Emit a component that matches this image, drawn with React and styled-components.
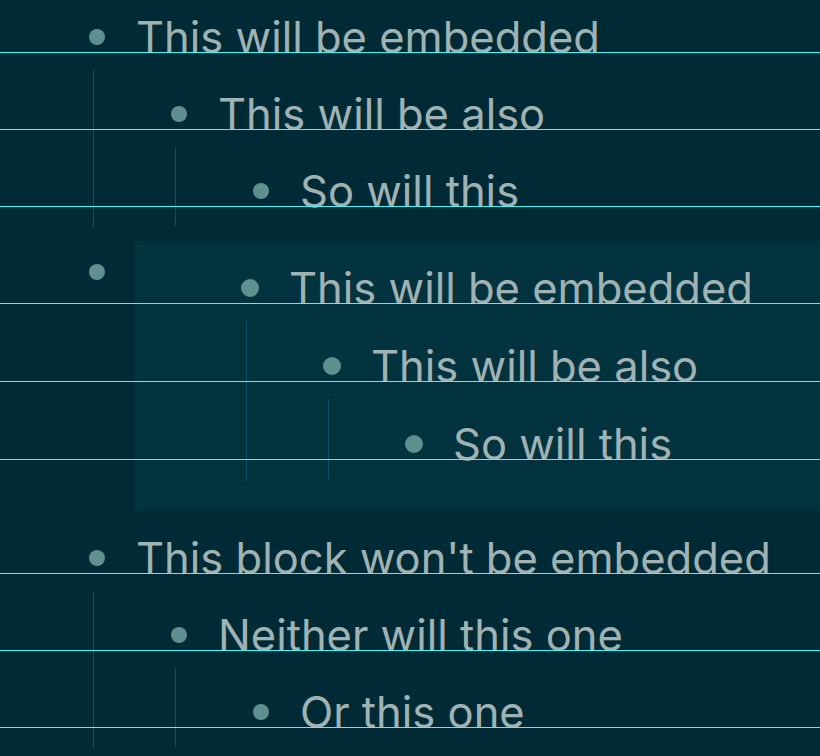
import styled, { createGlobalStyle } from "styled-components";

const GlobalStyle = createGlobalStyle`
    html, body {
        margin: 0;
        padding: 0;
        overflow: hidden;
        background: #002b36;
    }
    body {
        font-family: Inter, "Noto Sans", sans-serif;
    }
`

const Page = styled.div`
    position: relative;
    margin-top: -7px;
    padding-left: 77px;
`

const BlockWrap = styled.div`
    display: flex;
    flex-direction: column;
`

const Row = styled.div`
    display: flex;
    align-items: center;
    padding-top: ${p => p.$top}px;
    padding-bottom: 17px;
`

const BulletCol = styled.div`
    width: 40px;
    height: 32px;
    flex-shrink: 0;
    display: flex;
    align-items: center;
    justify-content: center;
    margin-top: ${p => p.$offset || 0}px;
`

const Bullet = styled.span`
    width: ${p => p.$size}px;
    height: ${p => p.$size}px;
    border-radius: 50%;
    background: #5f8f8f;
`

const Text = styled.div`
    display: flex;
    margin-left: 19px;
    height: 32px;
    line-height: 32px;
    font-size: 43.5px;
    color: #a0b2b2;
    white-space: nowrap;

    /* guide line at the baseline, runs across the whole page */
    &::after {
        content: "";
        position: absolute;
        left: 0;
        right: 0;
        margin-top: 31px;
        height: 1px;
        background: #4ff2f2;
    }
`

const Children = styled.div`
    margin-left: 16px;
    border-left: 1px solid #0f5062;
    padding-left: 65px;
    padding-bottom: 2px;
`

const EmbedRow = styled.div`
    display: flex;
    align-items: flex-start;
    padding-top: 13px;
    padding-bottom: 3px;
`

const Embed = styled.div`
    flex: 1;
    margin-left: 18px;
    background: #03333f;
    padding: 2px 0 30px 95px;
`

const Block = ({ text, children, bullet = 16, top = 28 }) => (
    <BlockWrap>
        <Row $top={top}>
            <BulletCol>
                <Bullet $size={bullet} />
            </BulletCol>
            <Text>{text}</Text>
        </Row>
        {children && children.length > 0 && (
            <Children>
                {children.map((c, i) => (
                    <Block key={i} text={c.text} children={c.children} bullet={bullet} top={top} />
                ))}
            </Children>
        )}
    </BlockWrap>
)

const embedded = {
    text: "This will be embedded",
    children: [
        { text: "This will be also", children: [{ text: "So will this" }] },
    ],
}

const notEmbedded = {
    text: "This block won't be embedded",
    children: [
        { text: "Neither will this one", children: [{ text: "Or this one" }] },
    ],
}

export default function App() {
    return (
        <>
            <GlobalStyle />
            <Page>
                <Block text={embedded.text} children={embedded.children} />
                <BlockWrap>
                    <EmbedRow>
                        <BulletCol $offset={15}>
                            <Bullet $size={16} />
                        </BulletCol>
                        <Embed>
                            <Block text={embedded.text} children={embedded.children} bullet={18} top={29} />
                        </Embed>
                    </EmbedRow>
                </BlockWrap>
                <Block text={notEmbedded.text} children={notEmbedded.children} />
            </Page>
        </>
    )
}
